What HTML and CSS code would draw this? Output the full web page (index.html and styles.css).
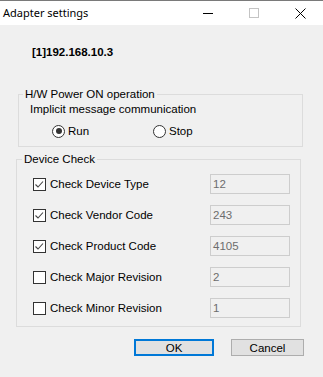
FILE: index.html
```html
<!DOCTYPE html>
<html lang="en">
<head>
  <meta charset="UTF-8" />
  <title>Adapter settings</title>
  <meta name="viewport" content="width=device-width, initial-scale=1" />
  <link rel="stylesheet" href="styles.css">
</head>
<body>
  <div class="window">
    <div class="titlebar">
      <span class="title">Adapter settings</span>
      <div class="caption">
        <span class="cap-btn">
          <svg width="10" height="10" viewBox="0 0 10 10"><line x1="0" y1="5.5" x2="10" y2="5.5" stroke="#000" stroke-width="1" /></svg>
        </span>
        <span class="cap-btn">
          <svg width="10" height="10" viewBox="0 0 10 10"><rect x="0.5" y="0.5" width="9" height="9" fill="none" stroke="#c4c4c4" stroke-width="1" /></svg>
        </span>
        <span class="cap-btn">
          <svg width="11" height="11" viewBox="0 0 11 11"><path d="M0.5 0.5 L10.5 10.5 M10.5 0.5 L0.5 10.5" stroke="#000" stroke-width="1" fill="none" /></svg>
        </span>
      </div>
    </div>

    <div class="content">
      <div class="ip">[1]192.168.10.3</div>

      <fieldset class="group group-power">
        <legend>H/W Power ON operation</legend>
        <div class="inner">
          <div class="sub">Implicit message communication</div>
          <div class="radios">
            <label class="radio run"><span class="dot on"></span>Run</label>
            <label class="radio"><span class="dot"></span>Stop</label>
          </div>
        </div>
      </fieldset>

      <fieldset class="group group-check">
        <legend>Device Check</legend>
        <div class="rows">
          <div class="row">
            <span class="check"><svg width="13" height="13" viewBox="0 0 13 13"><polyline points="2.5,6.5 5,9 10,3.5" fill="none" stroke="#444" stroke-width="1.1" /></svg></span>
            <span class="lbl">Check Device Type</span>
            <span class="field">12</span>
          </div>
          <div class="row">
            <span class="check"><svg width="13" height="13" viewBox="0 0 13 13"><polyline points="2.5,6.5 5,9 10,3.5" fill="none" stroke="#444" stroke-width="1.1" /></svg></span>
            <span class="lbl">Check Vendor Code</span>
            <span class="field">243</span>
          </div>
          <div class="row">
            <span class="check"><svg width="13" height="13" viewBox="0 0 13 13"><polyline points="2.5,6.5 5,9 10,3.5" fill="none" stroke="#444" stroke-width="1.1" /></svg></span>
            <span class="lbl">Check Product Code</span>
            <span class="field">4105</span>
          </div>
          <div class="row">
            <span class="check"></span>
            <span class="lbl">Check Major Revision</span>
            <span class="field">2</span>
          </div>
          <div class="row">
            <span class="check"></span>
            <span class="lbl">Check Minor Revision</span>
            <span class="field">1</span>
          </div>
        </div>
      </fieldset>

      <div class="buttons">
        <button class="btn btn-ok">OK</button>
        <button class="btn btn-cancel">Cancel</button>
      </div>
    </div>
  </div>
</body>
</html>
```

FILE: styles.css
```css
* {
  box-sizing: border-box;
}

body {
  margin: 0;
  background: #f0f0f0;
  font-family: 'Liberation Sans', Arial, sans-serif;
  font-size: 11.5px;
  line-height: 14px;
  color: #000;
}

.window {
  width: 323px;
  height: 377px;
  overflow: hidden;
}

/* title bar */
.titlebar {
  height: 25px;
  border-top: 1px solid #7a7a7a;
  background: #fff;
  display: flex;
  align-items: center;
  justify-content: space-between;
}

.title {
  font-family: 'Noto Sans', sans-serif;
  font-size: 11px;
  line-height: 16px;
  padding-left: 3px;
}

.caption {
  display: flex;
}

.cap-btn {
  width: 46px;
  height: 24px;
  display: flex;
  align-items: center;
  justify-content: center;
}

.cap-btn svg {
  display: block;
}

/* dialog body */
.ip {
  padding: 20px 0 0 32px;
  font-weight: bold;
}

.group {
  border: 1px solid #dcdcdc;
  padding: 0;
  min-width: 0;
}

.group legend {
  padding: 0 2px;
  line-height: 14px;
}

.group-power {
  margin: 28px 20px 0 18px;
}

.group-power legend {
  margin-left: 4px;
}

.group-power .inner {
  padding: 1px 0 8px 11px;
}

.radios {
  display: flex;
  margin-top: 8px;
  padding-left: 22px;
}

.radio {
  display: flex;
  align-items: center;
}

.radio.run {
  width: 101px;
}

.dot {
  width: 13px;
  height: 13px;
  border: 1px solid #333;
  border-radius: 50%;
  background: #fff;
  margin-right: 3px;
  display: grid;
  place-items: center;
}

.dot.on::after {
  content: '';
  width: 6px;
  height: 6px;
  border-radius: 50%;
  background: #333;
}

.group-check {
  margin: 5px 22px 0 16px;
}

.group-check legend {
  margin-left: 5px;
}

.rows {
  display: flex;
  flex-direction: column;
  gap: 1px;
  padding: 3px 10px 3px 16px;
}

.row {
  display: flex;
  align-items: center;
  height: 30px;
}

.check {
  width: 13px;
  height: 13px;
  border: 1px solid #333;
  background: #fff;
  position: relative;
}

.check svg {
  position: absolute;
  left: -1px;
  top: -1px;
}

.lbl {
  width: 164px;
  padding-left: 4px;
}

.field {
  width: 80px;
  height: 20px;
  border: 1px solid #cdcdcd;
  background: #f0f0f0;
  color: #6d6d6d;
  padding-left: 2px;
  line-height: 18px;
}

/* buttons */
.buttons {
  display: flex;
  justify-content: flex-end;
  gap: 17px;
  margin: 12px 19px 0 0;
}

.btn {
  font: inherit;
  height: 17px;
  padding: 0;
  background: #e1e1e1;
  border: 1px solid #adadad;
  color: #000;
  line-height: 14px;
}

.btn-ok {
  width: 80px;
  border: 2px solid #0078d7;
}

.btn-cancel {
  width: 73px;
}
```
